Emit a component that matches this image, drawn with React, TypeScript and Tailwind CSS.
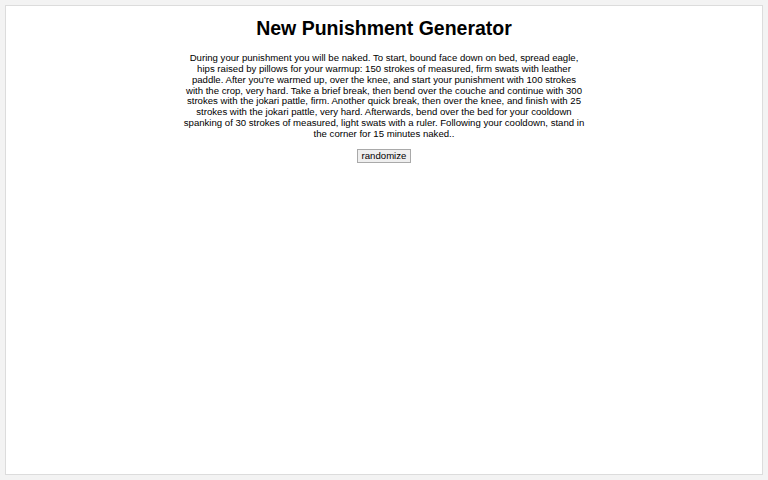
import { useState } from 'react';

const defaultText =
  "During your punishment you will be naked. To start, bound face down on bed, spread eagle, hips raised by pillows for your warmup: 150 strokes of measured, firm swats with leather paddle. After you're warmed up, over the knee, and start your punishment with 100 strokes with the crop, very hard. Take a brief break, then bend over the couche and continue with 300 strokes with the jokari pattle, firm. Another quick break, then over the knee, and finish with 25 strokes with the jokari pattle, very hard. Afterwards, bend over the bed for your cooldown spanking of 30 strokes of measured, light swats with a ruler. Following your cooldown, stand in the corner for 15 minutes naked..";

export default function App() {
  const [text] = useState(defaultText);

  return (
    <div className="h-[480px] w-[768px] bg-[#f3f3f3] p-[5px] font-['Liberation_Sans',Arial,sans-serif] text-black">
      <div className="flex h-[470px] flex-col items-center border border-[#dcdcdc] bg-white">
        <h1 className="mt-[10px] text-[19.5px] font-bold leading-[24px]">New Punishment Generator</h1>
        <p className="mt-[13px] w-[402px] text-center text-[9.6px] leading-[10.85px]">{text}</p>
        <button className="mt-[9px] border border-[#a9a9a9] bg-[#efefef] px-[4px] text-[9.6px] leading-[12px]">
          randomize
        </button>
      </div>
    </div>
  );
}
